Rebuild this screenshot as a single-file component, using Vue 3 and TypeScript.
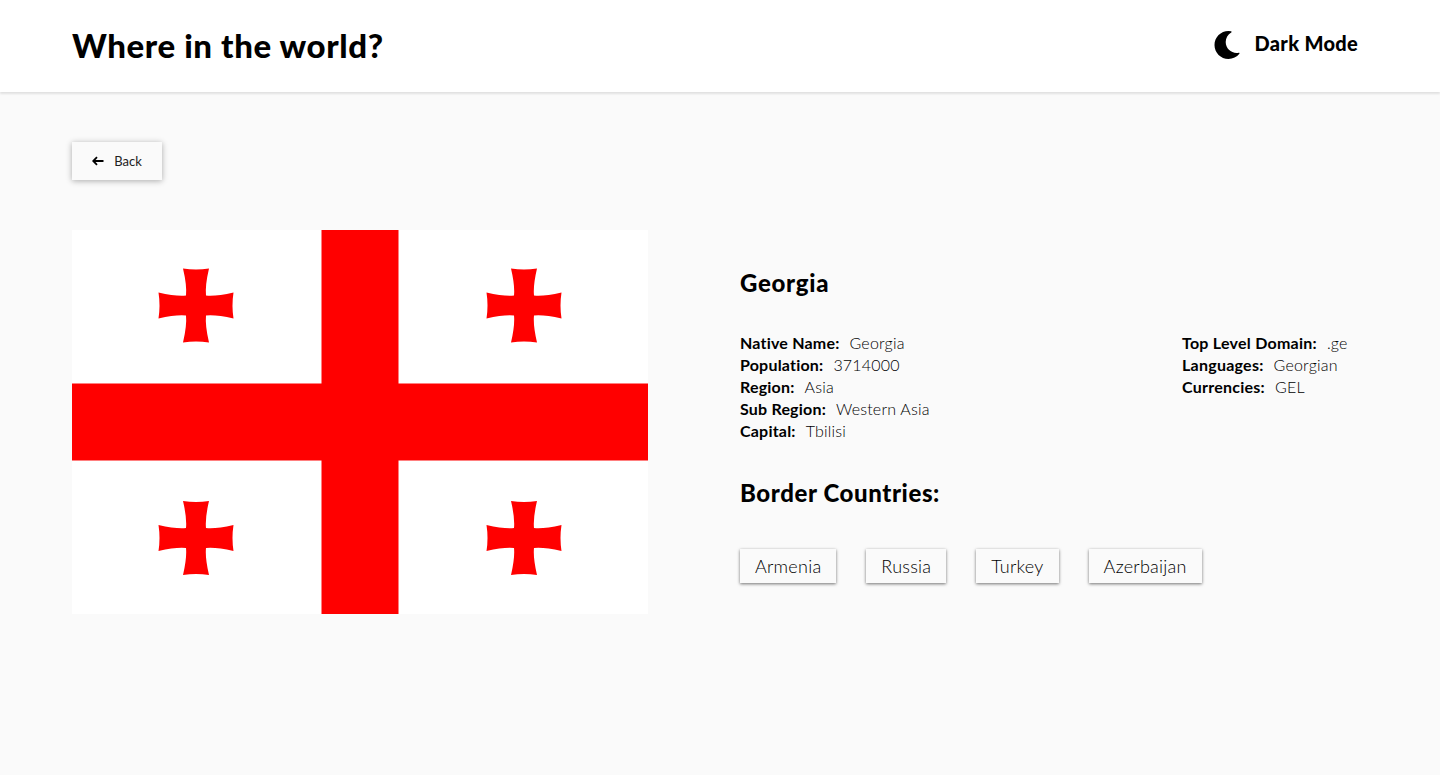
<template>
  <div class="page">
    <header class="topbar">
      <h1 class="brand">Where in the world?</h1>
      <button class="mode" type="button">
        <svg class="moon" viewBox="0 0 512 512" aria-hidden="true">
          <path d="M283.211 512c78.962 0 151.079-35.925 198.857-94.792 7.068-8.708-.639-21.43-11.562-19.35-124.203 23.654-238.262-71.576-238.262-196.954 0-72.222 38.662-138.635 101.498-174.394 9.686-5.512 7.25-20.197-3.756-22.23A258.156 258.156 0 0 0 283.211 0c-141.309 0-256 114.511-256 256 0 141.309 114.511 256 256 256z" />
        </svg>
        <span>Dark Mode</span>
      </button>
    </header>

    <main class="content">
      <button class="back" type="button">
        <svg class="arrow" viewBox="0 0 12 10" aria-hidden="true">
          <path d="M11.5 5H1.5M5 1.2 1.2 5 5 8.8" />
        </svg>
        <span>Back</span>
      </button>

      <section class="country">
        <svg class="flag" viewBox="0 0 576 384" role="img" aria-label="Flag of Georgia">
          <rect width="576" height="384" fill="#fff" />
          <rect x="249.5" width="77" height="384" fill="#f00" />
          <rect y="153.5" width="576" height="77" fill="#f00" />
          <path v-for="c in crosses" :key="c" :d="crossPath" :transform="c" fill="#f00" />
        </svg>

        <div class="details">
          <h2 class="name">Georgia</h2>
          <div class="facts">
            <ul>
              <li v-for="f in leftFacts" :key="f[0]"><b>{{ f[0] }}:</b><span>{{ f[1] }}</span></li>
            </ul>
            <ul class="facts-right">
              <li v-for="f in rightFacts" :key="f[0]"><b>{{ f[0] }}:</b><span>{{ f[1] }}</span></li>
            </ul>
          </div>
          <h3 class="borders-title">Border Countries:</h3>
          <div class="borders">
            <a v-for="b in borders" :key="b" class="tag">{{ b }}</a>
          </div>
        </div>
      </section>
    </main>
  </div>
</template>

<script setup lang="ts">
const crossPath =
  'M-13 -37Q0 -35 13 -37Q9 -20 10 -10Q20 -9 37.5 -13Q35.5 0 37.5 13Q20 9 10 10Q9 20 13 37Q0 35 -13 37Q-9 20 -10 10Q-20 9 -37.5 13Q-35.5 0 -37.5 -13Q-20 -9 -10 -10Q-9 -20 -13 -37Z'

const crosses = [
  'translate(124 75.5)',
  'translate(452 75.5)',
  'translate(124 308)',
  'translate(452 308)',
]

const leftFacts = [
  ['Native Name', 'Georgia'],
  ['Population', '3714000'],
  ['Region', 'Asia'],
  ['Sub Region', 'Western Asia'],
  ['Capital', 'Tbilisi'],
]

const rightFacts = [
  ['Top Level Domain', '.ge'],
  ['Languages', 'Georgian'],
  ['Currencies', 'GEL'],
]

const borders = ['Armenia', 'Russia', 'Turkey', 'Azerbaijan']
</script>

<style scoped>
.page {
  min-height: 775px;
  background: #fafafa;
  color: #000;
  font-family: "Lato", "Open Sans", sans-serif;
}

.topbar {
  height: 92px;
  box-sizing: border-box;
  padding: 0 82px 2px 72px;
  display: flex;
  align-items: center;
  justify-content: space-between;
  background: #fff;
  box-shadow: 0 2px 2px rgba(0, 0, 0, 0.1);
}

.brand {
  margin: 0;
  font-size: 33px;
  font-weight: 900;
  letter-spacing: 0.6px;
}

.mode {
  display: flex;
  align-items: center;
  gap: 13px;
  padding: 0;
  margin-top: -5px;
  border: 0;
  background: none;
  font: inherit;
  font-size: 20px;
  font-weight: 900;
  letter-spacing: 0.3px;
  color: #000;
}

.moon {
  width: 28px;
  height: 28px;
  margin-top: 5px;
}

.content {
  padding: 50px 72px 0;
}

.back {
  width: 90px;
  height: 38px;
  display: flex;
  align-items: center;
  justify-content: center;
  gap: 10px;
  padding: 0;
  border: 0;
  background: #fafafa;
  font: inherit;
  font-size: 13px;
  font-weight: 400;
  color: #222;
  box-shadow: 0 1px 6px rgba(0, 0, 0, 0.32);
}

.arrow {
  width: 12px;
  height: 10px;
  fill: none;
  stroke: #000;
  stroke-width: 1.8;
}

.country {
  margin-top: 50px;
  display: flex;
  gap: 92px;
}

.flag {
  flex: none;
  display: block;
  width: 576px;
  height: 384px;
}

.details {
  flex: 1;
  padding-top: 38px;
}

.name {
  margin: 0;
  font-size: 24px;
  line-height: 30px;
  font-weight: 900;
  letter-spacing: 0.7px;
}

.facts {
  margin-top: 34px;
  display: flex;
  justify-content: space-between;
}

.facts ul {
  margin: 0;
  padding: 0;
  list-style: none;
}

.facts-right {
  width: 186px;
}

.facts-right b {
  letter-spacing: 0.25px;
}

.facts li {
  font-size: 16px;
  line-height: 22px;
  font-weight: 300;
  white-space: nowrap;
  letter-spacing: 0.2px;
  color: #000;
}

.facts b {
  font-weight: 700;
  margin-right: 10px;
}

.borders-title {
  margin: 36px 0 0;
  font-size: 24px;
  line-height: 30px;
  font-weight: 900;
  letter-spacing: 0.6px;
}

.borders {
  margin-top: 41px;
  display: flex;
  gap: 30px;
}

.tag {
  padding: 0 15px;
  height: 34px;
  line-height: 34px;
  font-size: 18px;
  font-weight: 300;
  letter-spacing: 0.25px;
  color: #000;
  box-shadow: 0 1px 3px rgba(0, 0, 0, 0.55);
}
</style>

<style>
html,
body {
  background: #fafafa;
}
</style>
